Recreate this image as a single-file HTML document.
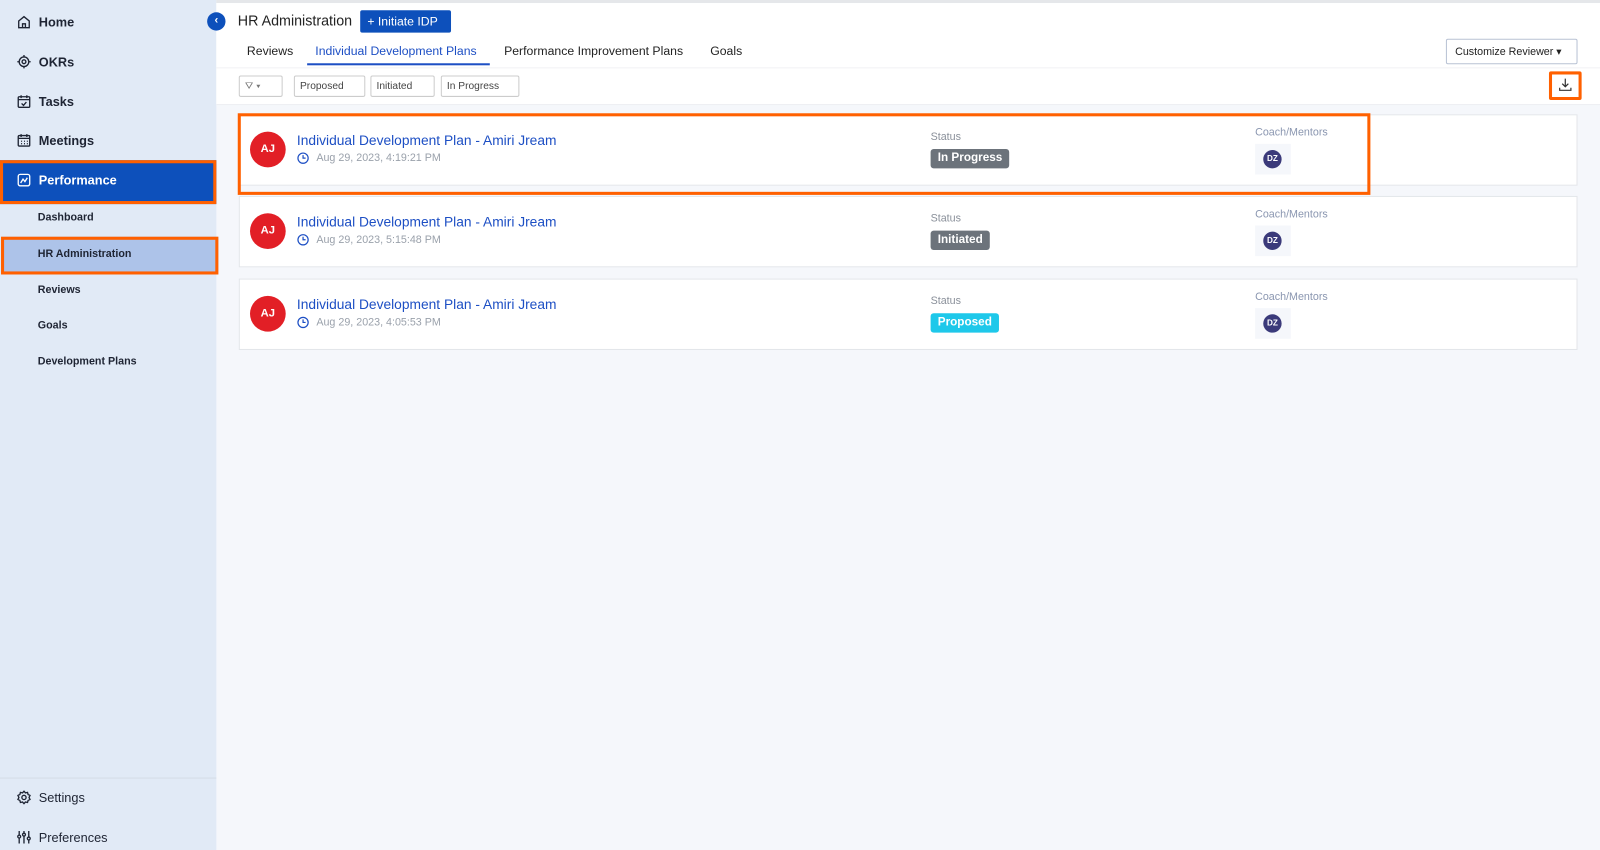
<!DOCTYPE html>
<html><head><meta charset="utf-8"><style>
*{box-sizing:border-box;margin:0;padding:0}
body{width:1600px;height:850px;overflow:hidden;background:#f5f7fb;font-family:"Liberation Sans",sans-serif;color:#222}
#w{position:absolute;left:0;top:0;width:1568px;height:833px;transform:scale(1.0204);transform-origin:0 0}
.side{position:absolute;left:0;top:0;width:212px;height:833px;background:#e1eaf6}
.ni{position:absolute;left:16px;font-size:12.5px;font-weight:bold;color:#1e2433;display:flex;align-items:center;gap:7px}
.ni svg{width:15px;height:15px}
.sub{position:absolute;left:37px;font-size:10.5px;font-weight:bold;color:#1e2433}
.ob{position:absolute;border:3px solid #ff6000}
.tab{position:absolute;top:43px;font-size:12px;color:#222}
.chip{position:absolute;top:74px;height:21px;border:1px solid #ccc;border-radius:2px;font-size:10px;color:#444;padding:4px 5px;background:#fff}
.card{position:absolute;left:234px;width:1312px;height:70px;background:#fff;border:1px solid #e3e6ea}
.av{position:absolute;left:10px;top:16px;width:35px;height:35px;border-radius:50%;background:#e21f26;color:#fff;font-weight:bold;font-size:11px;text-align:center;line-height:35px}
.tt{position:absolute;left:56px;top:17px;font-size:13.5px;color:#1d4fc4}
.dt{position:absolute;left:56px;top:36px;font-size:10.5px;color:#9aa1ab;display:flex;align-items:center;gap:7px}
.st{position:absolute;left:677px;top:15px;font-size:10.5px;color:#8a909a}
.bd{position:absolute;left:677px;top:33px;height:19px;line-height:19px;border-radius:3px;color:#fff;font-weight:bold;font-size:11.5px;padding:0 7px}
.cm{position:absolute;left:995px;top:11px;font-size:10.5px;color:#8a96b0}
.dzb{position:absolute;left:995px;top:28px;width:35px;height:30px;background:#f5f7fb}
.dz{position:absolute;left:8px;top:6px;width:18px;height:18px;border-radius:50%;background:#3b3a7a;color:#fff;font-size:8px;font-weight:bold;text-align:center;line-height:18px}
</style></head><body><div id="w">
<div class="side">
<div class="ni" style="top:14px"><svg viewBox="0 0 16 16" fill="none" stroke="#1e2433" stroke-width="1.4"><path d="M2.5 7L8 2.5 13.5 7V14H2.5Z M6.5 14V10H9.5V14"/></svg>Home</div>
<div class="ni" style="top:53px"><svg viewBox="0 0 16 16" fill="none" stroke="#1e2433" stroke-width="1.4"><circle cx="8" cy="8" r="5"/><circle cx="8" cy="8" r="2"/><path d="M8 1v2M8 13v2M1 8h2M13 8h2"/></svg>OKRs</div>
<div class="ni" style="top:92px"><svg viewBox="0 0 16 16" fill="none" stroke="#1e2433" stroke-width="1.4"><rect x="2" y="3" width="12" height="11" rx="1"/><path d="M5 1.5v3M11 1.5v3M2 6h12M5.5 10l2 2 3-3.5"/></svg>Tasks</div>
<div class="ni" style="top:130px"><svg viewBox="0 0 16 16" fill="none" stroke="#1e2433" stroke-width="1.4"><rect x="2" y="3" width="12" height="11" rx="1"/><path d="M5 1.5v3M11 1.5v3M2 6h12M5 9h1M8 9h1M11 9h1M5 11.5h1M8 11.5h1M11 11.5h1"/></svg>Meetings</div>
<div style="position:absolute;left:0;top:157px;width:212px;height:43px;background:#0d50bb;border:3px solid #ff6000"></div>
<div class="ni" style="top:169px;color:#fff"><svg viewBox="0 0 16 16" fill="none" stroke="#fff" stroke-width="1.4"><rect x="2" y="2" width="12" height="12" rx="2"/><path d="M4.5 11l2.5-4 2 2.5 2.5-4"/></svg>Performance</div>
<div class="sub" style="top:207px">Dashboard</div>
<div style="position:absolute;left:1px;top:232px;width:213px;height:37px;background:#adc3e9;border:3px solid #ff6000"></div>
<div class="sub" style="top:243px">HR Administration</div>
<div class="sub" style="top:278px">Reviews</div>
<div class="sub" style="top:313px">Goals</div>
<div class="sub" style="top:348px">Development Plans</div>
<div style="position:absolute;left:0;top:762px;width:212px;border-top:1px solid #d4dbe6"></div>
<div class="ni" style="top:774px;font-weight:normal"><svg viewBox="0 0 16 16" fill="none" stroke="#1e2433" stroke-width="1.4"><circle cx="8" cy="8" r="2.2"/><path d="M8 1.5l1.5 1.7 2.2-.5.6 2.2 2 1-1 2.1 1 2.1-2 1-.6 2.2-2.2-.5L8 14.5l-1.5-1.7-2.2.5-.6-2.2-2-1 1-2.1-1-2.1 2-1 .6-2.2 2.2.5Z"/></svg>Settings</div>
<div class="ni" style="top:813px;font-weight:normal"><svg viewBox="0 0 16 16" fill="none" stroke="#1e2433" stroke-width="1.4"><path d="M3 1.5v4M3 9v5.5M8 1.5v2M8 7v7.5M13 1.5v6M13 11v3.5"/><circle cx="3" cy="7.3" r="1.5"/><circle cx="8" cy="5.3" r="1.5"/><circle cx="13" cy="9.3" r="1.5"/></svg>Preferences</div>
</div>
<div style="position:absolute;left:212px;top:0;width:1388px;height:3px;background:#e5e7ea"></div>
<div style="position:absolute;left:212px;top:3px;width:1388px;height:100px;background:#fff;border-bottom:1px solid #eceef2"></div>
<div style="position:absolute;left:212px;top:66px;width:1388px;height:1px;background:#f0f1f4"></div>
<div style="position:absolute;left:203px;top:12px;width:18px;height:18px;border-radius:50%;background:#0d50bb;color:#fff;font-size:11px;text-align:center;line-height:17px;font-weight:bold">‹</div>
<div style="position:absolute;left:233px;top:12px;font-size:14px;color:#222">HR Administration</div>
<div style="position:absolute;left:353px;top:10px;width:89px;height:22px;background:#0d50bb;color:#fff;font-size:12px;padding:4px 0 0 7px;border-radius:2px">+ Initiate IDP</div>
<div class="tab" style="left:242px">Reviews</div>
<div class="tab" style="left:309px;color:#1d4fc4">Individual Development Plans</div>
<div style="position:absolute;left:301px;top:62px;width:179px;height:2px;background:#1d4fc4"></div>
<div class="tab" style="left:494px">Performance Improvement Plans</div>
<div class="tab" style="left:696px">Goals</div>
<div style="position:absolute;left:1417px;top:38px;width:129px;height:25px;border:1px solid #b8c2d4;font-size:10.5px;color:#222;padding:6px 0 0 8px;border-radius:2px">Customize Reviewer ▾</div>
<div class="chip" style="left:234px;width:43px;color:#777">⛛ ▾</div>
<div class="chip" style="left:288px;width:70px">Proposed</div>
<div class="chip" style="left:363px;width:63px">Initiated</div>
<div class="chip" style="left:432px;width:77px">In Progress</div>
<div class="ob" style="left:1518px;top:70px;width:32px;height:28px;border-radius:2px"></div>
<svg style="position:absolute;left:1527px;top:76px" width="14" height="14" viewBox="0 0 14 14" fill="none" stroke="#333" stroke-width="1.2"><path d="M7 1v8M4 6l3 3 3-3M1.5 10v2.5h11V10"/></svg>

<div class="card" style="top:112px"><div class="av">AJ</div><div class="tt">Individual Development Plan - Amiri Jream</div><div class="dt"><svg width="12" height="12" viewBox="0 0 12 12" fill="none" stroke="#1d4fc4" stroke-width="1.2"><circle cx="6" cy="6" r="5"/><path d="M6 3v3h2.5"/></svg>Aug 29, 2023, 4:19:21 PM</div><div class="st">Status</div><div class="bd" style="background:#6c737b">In Progress</div><div class="cm">Coach/Mentors</div><div class="dzb"><div class="dz">DZ</div></div></div>
<div class="card" style="top:192px"><div class="av">AJ</div><div class="tt">Individual Development Plan - Amiri Jream</div><div class="dt"><svg width="12" height="12" viewBox="0 0 12 12" fill="none" stroke="#1d4fc4" stroke-width="1.2"><circle cx="6" cy="6" r="5"/><path d="M6 3v3h2.5"/></svg>Aug 29, 2023, 5:15:48 PM</div><div class="st">Status</div><div class="bd" style="background:#6c737b">Initiated</div><div class="cm">Coach/Mentors</div><div class="dzb"><div class="dz">DZ</div></div></div>
<div class="card" style="top:273px"><div class="av">AJ</div><div class="tt">Individual Development Plan - Amiri Jream</div><div class="dt"><svg width="12" height="12" viewBox="0 0 12 12" fill="none" stroke="#1d4fc4" stroke-width="1.2"><circle cx="6" cy="6" r="5"/><path d="M6 3v3h2.5"/></svg>Aug 29, 2023, 4:05:53 PM</div><div class="st">Status</div><div class="bd" style="background:#1ec8ea">Proposed</div><div class="cm">Coach/Mentors</div><div class="dzb"><div class="dz">DZ</div></div></div>
<div class="ob" style="left:233px;top:111px;width:1110px;height:80px"></div>
</div></body></html>
